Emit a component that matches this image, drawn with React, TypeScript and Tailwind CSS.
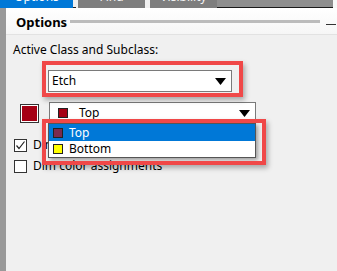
import React from "react";

const font = { fontFamily: '"Noto Sans", "Liberation Sans", sans-serif' };

function Arrow({ className = "" }: { className?: string }) {
  return (
    <svg width="11" height="7" viewBox="0 0 11 7" className={className}>
      <path d="M0 0 H11 L5.5 7 Z" fill="#000" />
    </svg>
  );
}

export default function App() {
  return (
    <div className="relative w-[337px] h-[271px] overflow-hidden bg-[#f0f0f0] text-[12px] text-black" style={font}>
      {/* tab bar */}
      <div className="flex h-[8px] bg-[#efefef] overflow-hidden">
        <div className="w-[73px] h-[8px] bg-[#0078d7] text-white flex justify-center overflow-hidden">
          <span className="leading-[16px] -mt-[11px]">Options</span>
        </div>
        <div className="w-[5px] h-[8px] flex flex-col justify-end">
          <div className="h-[1px] w-[3px] bg-[#222]" />
        </div>
        <div className="w-[67px] h-[8px] bg-[#7e7e7e] text-[#f4f4f4] flex justify-center overflow-hidden">
          <span className="leading-[16px] -mt-[11px]">Find</span>
        </div>
        <div className="w-[5px]" />
        <div className="w-[67px] h-[8px] bg-[#7e7e7e] text-[#f4f4f4] flex justify-center overflow-hidden">
          <span className="leading-[16px] -mt-[11px]">Visibility</span>
        </div>
        <div className="flex-1 h-[8px] bg-[#8e8e8e] border-b border-[#1a1a1a]" />
        <div className="w-[4px] h-[8px] bg-[#f8f8f8]" />
      </div>

      <div className="flex h-[263px]">
        <div className="w-[6px] bg-[#999999]" />
        <div className="flex-1 flex flex-col">
          {/* header */}
          <div className="h-[27px] bg-gradient-to-b from-[#ffffff] to-[#f6f6f6] border-b border-[#e2e2e2] flex items-center pl-[10px]">
            <span className="font-bold text-[13px] leading-[16px] mt-[1px]">Options</span>
            <div className="ml-[3px] w-[250px] h-[3px] bg-[#bcbcbc] mt-[1px]" />
            <div className="ml-[6px] w-[10px] h-[1.5px] bg-[#333] mt-[7px]" />
          </div>

          <div className="pl-[7px] pt-[7px]">
            <div className="leading-[16px]">Active Class and Subclass:</div>
            <div className="ml-[35px] mt-[12px] w-[184px] h-[22px] bg-white border border-[#7a7a7a] flex items-center justify-between pl-[3px] pr-[5px]">
              <span className="leading-[16px]">Etch</span>
              <Arrow />
            </div>

            <div className="flex items-start mt-[10px]">
              <div className="ml-[7px] mt-[2px] w-[19px] h-[19px] border border-[#333] bg-white p-[1px]">
                <div className="w-full h-full bg-[#a50014]" />
              </div>
              <div className="ml-[10px] w-[207px] h-[22px] bg-white border border-[#7a7a7a] flex items-center pl-[8px] pr-[5px]">
                <div className="w-[10px] h-[10px] border border-[#222] bg-[#a50014]" />
                <span className="ml-[11px] leading-[16px] flex-1">Top</span>
                <Arrow />
              </div>
            </div>

            <div className="flex items-center mt-[13px] ml-[1px]">
              <div className="w-[13px] h-[13px] border border-[#333] bg-white flex items-center justify-center">
                <svg width="11" height="11" viewBox="0 0 11 11">
                  <path d="M1.5 5.5 L4 8.5 L9.5 1.5" stroke="#222" strokeWidth="1.2" fill="none" />
                </svg>
              </div>
              <span className="ml-[6px] leading-[16px]">Dim active layer</span>
            </div>
            <div className="flex items-center mt-[5px] ml-[1px]">
              <div className="w-[13px] h-[13px] border border-[#333] bg-white" />
              <span className="ml-[6px] leading-[16px]">Dim color assignments</span>
            </div>
          </div>
        </div>
      </div>

      {/* red annotation box 1 */}
      <div className="absolute left-[42px] top-[61px] w-[201px] h-[36px] border-[4px] border-[#f04848] shadow-[2px_3px_5px_rgba(0,0,0,0.3)]" />

      {/* dropdown list */}
      <div className="absolute left-[48px] top-[123px] w-[208px] h-[35px] bg-white border border-[#555] shadow-[2px_2px_4px_rgba(0,0,0,0.35)]">
        <div className="h-[17px] bg-[#0078d7] text-white flex items-center pl-[4px]">
          <div className="w-[10px] h-[10px] border border-[#222] bg-[#7a2a4e]" />
          <span className="ml-[6px] leading-[16px]">Top</span>
        </div>
        <div className="h-[16px] flex items-center pl-[4px]">
          <div className="w-[10px] h-[10px] border border-[#222] bg-[#ffff00]" />
          <span className="ml-[6px] leading-[16px]">Bottom</span>
        </div>
      </div>

      {/* red annotation box 2 */}
      <div className="absolute left-[42px] top-[119px] w-[224px] h-[46px] border-[4px] border-[#f04848] shadow-[2px_3px_5px_rgba(0,0,0,0.3)]" />
    </div>
  );
}
